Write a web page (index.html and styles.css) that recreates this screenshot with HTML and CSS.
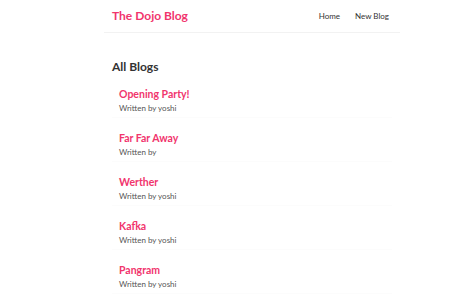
FILE: index.html
```html
<!DOCTYPE html>
<html>
<head>
<meta charset="utf-8">
<link rel="stylesheet" href="styles.css">
</head>
<body>
<div class="app">
  <nav class="navbar">
    <h1 class="logo">The Dojo Blog</h1>
    <div class="links">
      <a class="link" href="#">Home</a>
      <a class="link" href="#">New Blog</a>
    </div>
  </nav>
  <div class="content">
    <div class="blog-list">
      <h2 class="list-title">All Blogs</h2>
      <div class="blog-preview">
        <h2 class="blog-title">Opening Party!</h2>
        <p class="blog-author">Written by yoshi</p>
      </div>
      <div class="blog-preview">
        <h2 class="blog-title">Far Far Away</h2>
        <p class="blog-author">Written by </p>
      </div>
      <div class="blog-preview">
        <h2 class="blog-title">Werther</h2>
        <p class="blog-author">Written by yoshi</p>
      </div>
      <div class="blog-preview">
        <h2 class="blog-title">Kafka</h2>
        <p class="blog-author">Written by yoshi</p>
      </div>
      <div class="blog-preview">
        <h2 class="blog-title">Pangram</h2>
        <p class="blog-author">Written by yoshi</p>
      </div>
    </div>
  </div>
</div>
</body>
</html>
```
FILE: styles.css
```css
* {
  margin: 0;
  box-sizing: border-box;
}
html, body {
  margin: 0;
  background: #ffffff;
  font-family: "Lato", "Open Sans", sans-serif;
  color: #333333;
}
.app {
  width: 296px;
  margin-left: 104px;
}
.navbar {
  display: flex;
  align-items: center;
  height: 33px;
  padding: 0 11px 0 8px;
  border-bottom: 1px solid #f2f2f2;
}
.logo {
  font-size: 12px;
  font-weight: 700;
  color: #f1356d;
  line-height: 20px;
}
.links {
  margin-left: auto;
  display: flex;
  gap: 15px;
}
.link {
  font-size: 8px;
  color: #333333;
  text-decoration: none;
}
.content {
  padding: 26px 8px 0;
}
.list-title {
  font-size: 12px;
  font-weight: 700;
  color: #333333;
  line-height: 15px;
}
.blog-preview {
  padding: 4px 7px 3px;
  margin: 10px 0;
  border-bottom: 1px solid #fcfcfc;
}
.blog-title {
  font-size: 10.5px;
  font-weight: 700;
  color: #f1356d;
  line-height: 13px;
  margin-bottom: 2px;
}
.blog-author {
  font-size: 8px;
  color: #555555;
  line-height: 11px;
}
```
